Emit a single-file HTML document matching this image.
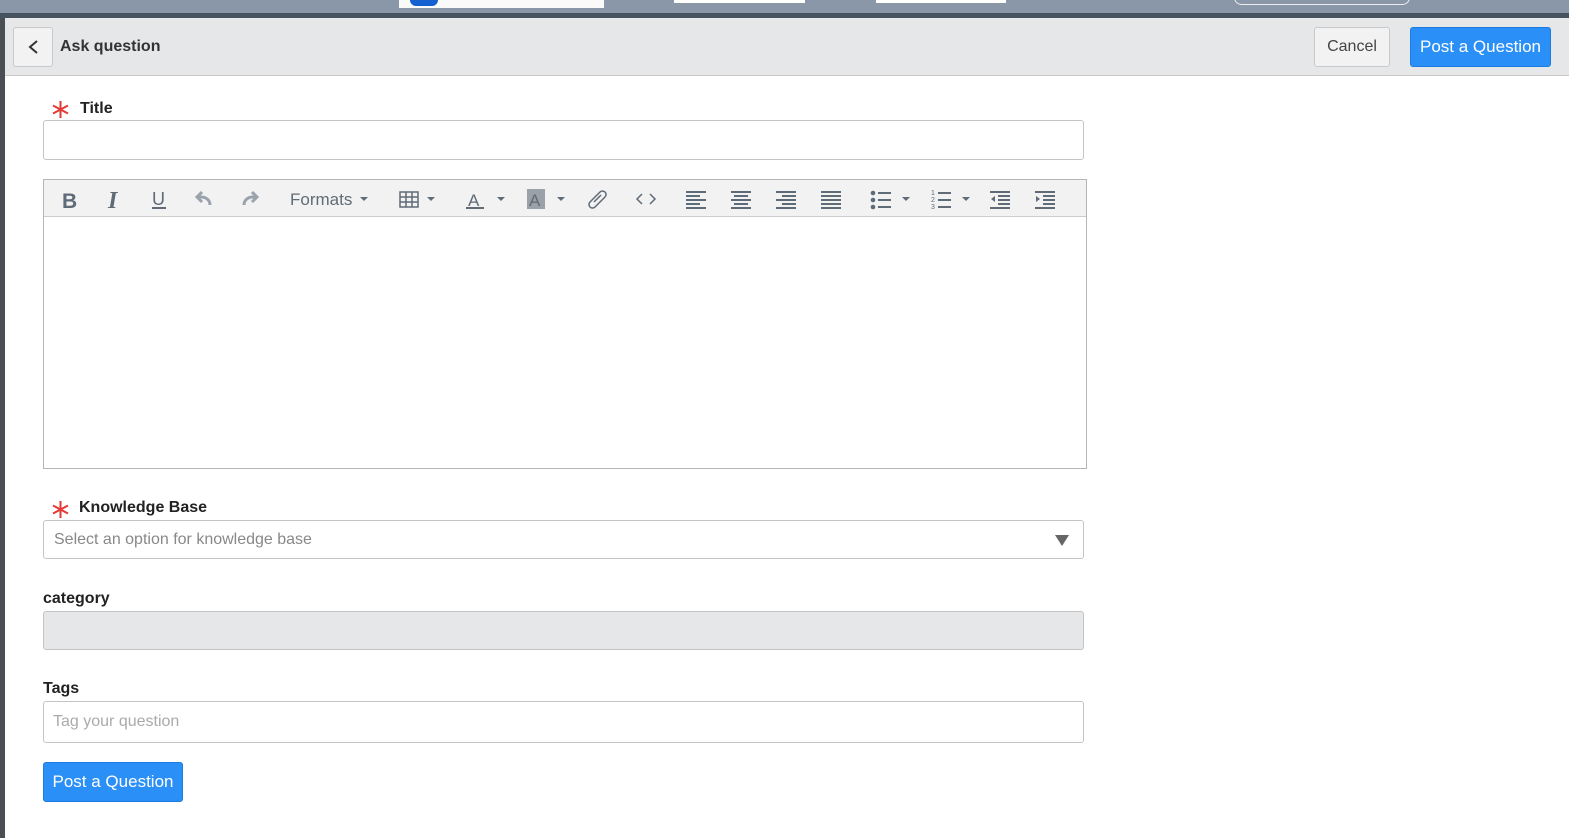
<!DOCTYPE html>
<html><head><meta charset="utf-8"><style>
*{box-sizing:border-box;margin:0;padding:0}
body{width:1569px;height:838px;overflow:hidden;background:#fff;font-family:"Liberation Sans",Arial,sans-serif;position:relative;color:#222}
.a{position:absolute}
.top{left:0;top:0;width:1569px;height:13px;background:#8a97a8}
.dk{left:0;top:13px;width:1569px;height:5px;background:#46525f}
.hdr{left:5px;top:18px;width:1564px;height:58px;background:#e6e7e8;border-bottom:1px solid #c8c8c8}
.lft{left:0;top:18px;width:5px;height:820px;background:#4a4f55}
.btn{border:1px solid #c9c9c9;border-radius:3px;background:#f2f2f2}
.blue{background:#2a8ff7;border:1px solid #1c7ce0;color:#fff;border-radius:3px;font-size:17px;text-align:center}
.lbl{font-weight:bold;font-size:16px;color:#222}
.inp{border:1px solid #c4c4c4;border-radius:3px;background:#fff}
</style></head><body>
<div class="a top"></div>
<div class="a" style="left:399px;top:0;width:205px;height:8px;background:#fafafa"></div>
<div class="a" style="left:410px;top:0;width:28px;height:6px;background:#1560d0;border-radius:0 0 14px 14px"></div>
<div class="a" style="left:674px;top:0;width:131px;height:3px;background:#fff"></div>
<div class="a" style="left:876px;top:0;width:130px;height:3px;background:#fff"></div>
<div class="a" style="left:1234px;top:-10px;width:176px;height:15px;border:1px solid #eee;border-radius:8px"></div>
<div class="a dk"></div>
<div class="a hdr"></div>
<div class="a lft"></div>
<div class="a btn" style="left:13px;top:27px;width:40px;height:40px"><svg width="40" height="40" style="position:absolute;left:-1px;top:-1px"><path d="M24 14l-7 6 7 6" stroke="#333" stroke-width="2" fill="none"/></svg></div>
<div class="a" style="left:60px;top:38px;font-size:16px;font-weight:bold;color:#333">Ask question</div>
<div class="a btn" style="left:1314px;top:27px;width:76px;height:40px;font-size:16px;color:#444;text-align:center;line-height:38px">Cancel</div>
<div class="a blue" style="left:1410px;top:27px;width:141px;height:40px;line-height:38px">Post a Question</div>

<svg class="a" style="left:52px;top:101px" width="17" height="17"><g stroke="#e53935" stroke-width="2"><path d="M8.5 0v17M1 4.5l15 8M1 12.5l15-8"/></g></svg>
<div class="a lbl" style="left:80px;top:100px">Title</div>
<div class="a inp" style="left:43px;top:120px;width:1041px;height:40px"></div>

<div class="a" style="left:43px;top:179px;width:1044px;height:290px;border:1px solid #b5b5b5"></div>
<div class="a" style="left:44px;top:180px;width:1042px;height:37px;background:#f2f2f2;border-bottom:1px solid #ccc"></div>
<svg class="a" style="left:44px;top:180px" width="1042" height="37" font-family="Liberation Sans,Arial,sans-serif">
<g fill="#5f6b77">
<text x="18" y="28" font-size="21" font-weight="bold">B</text>
<text x="64" y="28" font-size="24" font-style="italic" font-weight="bold" font-family="Liberation Serif,serif">I</text>
<text x="108" y="25" font-size="18">U</text><rect x="108" y="27" width="14" height="2"/>
<text x="246" y="25" font-size="17">Formats</text><path d="M316 17h8l-4 4z"/>
<path d="M383 17h8l-4 4z"/><path d="M453 17h8l-4 4z"/><path d="M513 17h8l-4 4z"/>
<text x="424" y="26" font-size="17">A</text><rect x="422" y="27" width="18" height="2"/>
<rect x="483" y="9" width="18" height="20" fill="#9aa1a8"/><text x="485" y="26" font-size="17" fill="#5f6b77">A</text>
<path d="M858 17h8l-4 4z"/><path d="M918 17h8l-4 4z"/>
</g>
<g stroke="#9aa3ac" stroke-width="3" fill="none"><path d="M166 25c0-5-4-8-9-8h-3M158 12l-5 5 5 5"/><path d="M200 25c0-5 4-8 9-8h3M208 12l5 5-5 5"/></g>
<g stroke="#5f6b77" stroke-width="1.5" fill="none">
<rect x="356" y="12" width="18" height="15"/><path d="M356 17h18M356 22h18M362 12v15M368 12v15"/>
<path d="M550 18l6-6a3 3 0 0 1 5 5l-6 6M557 21l-6 6a3 3 0 0 1-5-5l6-6M550 22l7-7"/>
<path d="M598 14l-5 5 5 5M606 14l5 5-5 5"/>
</g>
<g fill="#5f6b77">
<rect x="642" y="11" width="20" height="2"/><rect x="642" y="15" width="14" height="2"/><rect x="642" y="19" width="20" height="2"/><rect x="642" y="23" width="14" height="2"/><rect x="642" y="27" width="20" height="2"/>
<rect x="687" y="11" width="20" height="2"/><rect x="690" y="15" width="14" height="2"/><rect x="687" y="19" width="20" height="2"/><rect x="690" y="23" width="14" height="2"/><rect x="687" y="27" width="20" height="2"/>
<rect x="732" y="11" width="20" height="2"/><rect x="738" y="15" width="14" height="2"/><rect x="732" y="19" width="20" height="2"/><rect x="738" y="23" width="14" height="2"/><rect x="732" y="27" width="20" height="2"/>
<rect x="777" y="11" width="20" height="2"/><rect x="777" y="15" width="20" height="2"/><rect x="777" y="19" width="20" height="2"/><rect x="777" y="23" width="20" height="2"/><rect x="777" y="27" width="20" height="2"/>
<circle cx="829" cy="13" r="2.3"/><circle cx="829" cy="20" r="2.3"/><circle cx="829" cy="27" r="2.3"/>
<rect x="834" y="12" width="13" height="2"/><rect x="834" y="19" width="13" height="2"/><rect x="834" y="26" width="13" height="2"/>
<text x="887" y="15" font-size="7">1</text><text x="887" y="22" font-size="7">2</text><text x="887" y="29" font-size="7">3</text>
<rect x="894" y="12" width="13" height="2"/><rect x="894" y="19" width="13" height="2"/><rect x="894" y="26" width="13" height="2"/>
<rect x="946" y="11" width="20" height="2"/><rect x="954" y="15" width="12" height="2"/><rect x="954" y="19" width="12" height="2"/><rect x="954" y="23" width="12" height="2"/><rect x="946" y="27" width="20" height="2"/><path d="M951 16v6l-4-3z"/>
<rect x="991" y="11" width="20" height="2"/><rect x="999" y="15" width="12" height="2"/><rect x="999" y="19" width="12" height="2"/><rect x="999" y="23" width="12" height="2"/><rect x="991" y="27" width="20" height="2"/><path d="M992 16v6l4-3z"/>
</g>
</svg>

<svg class="a" style="left:52px;top:501px" width="17" height="17"><g stroke="#e53935" stroke-width="2"><path d="M8.5 0v17M1 4.5l15 8M1 12.5l15-8"/></g></svg>
<div class="a lbl" style="left:79px;top:499px">Knowledge Base</div>
<div class="a inp" style="left:43px;top:520px;width:1041px;height:39px;font-size:16px;color:#888;padding:10px 0 0 10px">Select an option for knowledge base<svg class="a" style="right:14px;top:14px" width="14" height="11"><path d="M0 0h14l-7 11z" fill="#666"/></svg></div>

<div class="a lbl" style="left:43px;top:590px">category</div>
<div class="a inp" style="left:43px;top:611px;width:1041px;height:39px;background:#e6e7e8"></div>

<div class="a lbl" style="left:43px;top:680px">Tags</div>
<div class="a inp" style="left:43px;top:701px;width:1041px;height:42px;font-size:16px;color:#aaa;padding:11px 0 0 9px">Tag your question</div>

<div class="a blue" style="left:43px;top:762px;width:140px;height:40px;line-height:38px">Post a Question</div>
</body></html>
